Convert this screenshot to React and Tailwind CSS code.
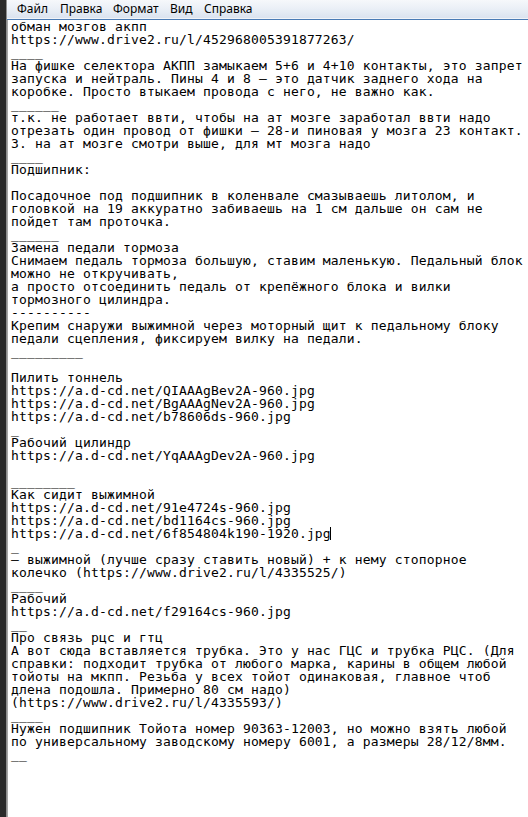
import React from "react";

const LINES = [
  "обман мозгов акпп",
  "https://www.drive2.ru/l/452968005391877263/",
  "____",
  "На фишке селектора АКПП замыкаем 5+6 и 4+10 контакты, это запрет",
  "запуска и нейтраль. Пины 4 и 8 – это датчик заднего хода на",
  "коробке. Просто втыкаем провода с него, не важно как.",
  "______",
  "т.к. не работает ввти, чтобы на ат мозге заработал ввти надо",
  "отрезать один провод от фишки – 28-и пиновая у мозга 23 контакт.",
  "3. на ат мозге смотри выше, для мт мозга надо",
  "____",
  "Подшипник:",
  "",
  "Посадочное под подшипник в коленвале смазываешь литолом, и",
  "головкой на 19 аккуратно забиваешь на 1 см дальше он сам не",
  "пойдет там проточка.",
  "______",
  "Замена педали тормоза",
  "Снимаем педаль тормоза большую, ставим маленькую. Педальный блок",
  "можно не откручивать,",
  "а просто отсоединить педаль от крепёжного блока и вилки",
  "тормозного цилиндра.",
  "----------",
  "Крепим снаружи выжимной через моторный щит к педальному блоку",
  "педали сцепления, фиксируем вилку на педали.",
  "_________",
  "",
  "Пилить тоннель",
  "https://a.d-cd.net/QIAAAgBev2A-960.jpg",
  "https://a.d-cd.net/BgAAAgNev2A-960.jpg",
  "https://a.d-cd.net/b78606ds-960.jpg",
  "_",
  "Рабочий цилиндр",
  "https://a.d-cd.net/YqAAAgDev2A-960.jpg",
  "",
  "________",
  "Как сидит выжимной",
  "https://a.d-cd.net/91e4724s-960.jpg",
  "https://a.d-cd.net/bd1164cs-960.jpg",
  "https://a.d-cd.net/6f854804k190-1920.jpg",
  "_",
  "– выжимной (лучше сразу ставить новый) + к нему стопорное",
  "колечко (https://www.drive2.ru/l/4335525/)",
  "____",
  "Рабочий",
  "https://a.d-cd.net/f29164cs-960.jpg",
  "__",
  "Про связь рцс и гтц",
  "А вот сюда вставляется трубка. Это у нас ГЦС и трубка РЦС. (Для",
  "справки: подходит трубка от любого марка, карины в общем любой",
  "тойоты на мкпп. Резьба у всех тойот одинаковая, главное чтоб",
  "длена подошла. Примерно 80 см надо)",
  "(https://www.drive2.ru/l/4335593/)",
  "____",
  "Нужен подшипник Тойота номер 90363-12003, но можно взять любой",
  "по универсальному заводскому номеру 6001, а размеры 28/12/8мм.",
  "__",
];

const CURSOR_LINE = 39;

export default function App() {
  return (
    <div className="flex h-[817px] w-[528px] overflow-hidden bg-[#262626]">
      <div className="flex w-[7px] shrink-0">
        <div className="w-[6px] bg-[#2a2a2a]" />
        <div className="w-[1px] bg-[#8e8e8e]" />
      </div>
      <div className="flex min-w-0 flex-1 flex-col bg-white">
        <div className="flex h-[18px] shrink-0 items-center bg-gradient-to-b from-[#f6f8fb] via-[#eaeff6] to-[#dbe3ef] pl-[10px] text-[12px] leading-none text-black [font-family:'Noto_Sans','Open_Sans',sans-serif]">
          <span className="w-[43px]">Файл</span>
          <span className="w-[53px]">Правка</span>
          <span className="w-[57px]">Формат</span>
          <span className="w-[34px]">Вид</span>
          <span>Справка</span>
        </div>
        <div className="h-[1px] shrink-0 bg-[#f2f4f8]" />
        <div className="h-[1px] shrink-0 bg-[#4a7bb5]" />
        <div className="min-h-0 flex-1 overflow-hidden border-l border-[#a7a7a7] pl-[3px] text-[13px] leading-[13px] tracking-[0.17px] text-black [font-family:'DejaVu_Sans_Mono','Liberation_Mono',monospace]">
          {LINES.map((line, i) => (
            <div key={i} className="flex h-[13px] items-stretch whitespace-pre">
              <span>{line}</span>
              {i === CURSOR_LINE && <span className="ml-[-1px] w-[1px] bg-black" />}
            </div>
          ))}
        </div>
      </div>
    </div>
  );
}
